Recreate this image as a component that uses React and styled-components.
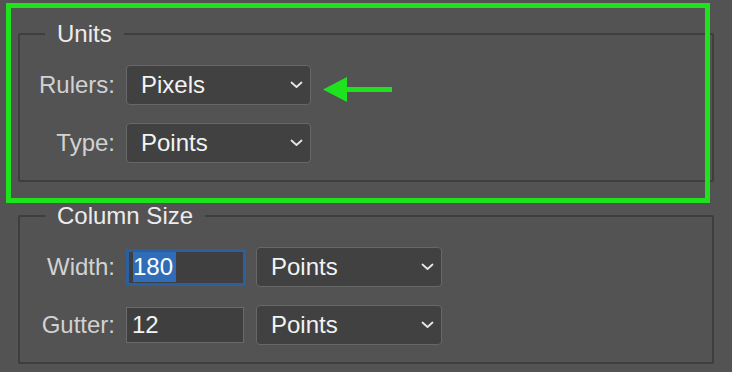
import React from "react";
import styled, { createGlobalStyle } from "styled-components";

const GlobalStyle = createGlobalStyle`
  html, body {
    margin: 0;
    padding: 0;
    background: #535353;
  }
  body {
    font-family: "Liberation Sans", Arial, sans-serif;
  }
`;

const Page = styled.div`
  position: relative;
  width: 732px;
  height: 372px;
  box-sizing: border-box;
  padding: 22px 18px 0 18px;
  background: #535353;
  display: flex;
  flex-direction: column;
  gap: 22px;
  overflow: hidden;
`;

const Group = styled.fieldset`
  margin: 0;
  min-width: 0;
  padding: 19px 0 17px 0;
  border: 2px solid #3e3e3e;
  border-radius: 2px;
  display: grid;
  grid-template-columns: 96px auto auto 1fr;
  column-gap: 10px;
  row-gap: 18px;
  align-items: center;
`;

const Legend = styled.legend`
  margin-left: 25px;
  padding: 0 12px;
  font-size: 24px;
  line-height: 24px;
  color: #ececec;
`;

const Label = styled.label`
  grid-column: 1;
  justify-self: end;
  font-size: 24px;
  color: #d2d2d2;
  margin-right: 1px;
`;

const SelectBox = styled.div`
  grid-column: ${(p) => p.$col || 2};
  width: ${(p) => p.$width}px;
  height: 40px;
  box-sizing: border-box;
  border: 1.5px solid #676767;
  border-radius: 4px;
  background: #414141;
  display: flex;
  align-items: center;
  justify-content: space-between;
  padding: 0 7px 0 14px;
  font-size: 24px;
  color: #f3f3f3;
`;

const Field = styled.div`
  grid-column: 2;
  width: ${(p) => (p.$focused ? 120 : 118)}px;
  height: ${(p) => (p.$focused ? 37 : 36)}px;
  box-sizing: border-box;
  border: ${(p) => (p.$focused ? "3px solid #2c5f9f" : "1.5px solid #6a6a6a")};
  background: #3f3f3f;
  display: flex;
  align-items: center;
  padding-left: ${(p) => (p.$focused ? 4 : 5)}px;
  font-size: 24px;
  color: #f3f3f3;
`;

const Selected = styled.span`
  background: #2f6db9;
  line-height: 30px;
  padding-right: 3px;
  color: #ffffff;
`;

const Highlight = styled.div`
  position: absolute;
  left: 6px;
  top: 3px;
  width: 704px;
  height: 200px;
  box-sizing: border-box;
  border: 5px solid #1fe21f;
  pointer-events: none;
`;

const Pointer = styled.svg`
  position: absolute;
  left: 322px;
  top: 76px;
`;

const Chevron = () => (
  <svg width="13" height="8" viewBox="0 0 13 8">
    <polyline
      points="1.5,1.5 6.5,6 11.5,1.5"
      fill="none"
      stroke="#e6e6e6"
      strokeWidth="1.8"
      strokeLinecap="round"
      strokeLinejoin="round"
    />
  </svg>
);

const Select = ({ value, width = 185, col }) => (
  <SelectBox $width={width} $col={col}>
    <span>{value}</span>
    <Chevron />
  </SelectBox>
);

export default function App() {
  return (
    <>
      <GlobalStyle />
      <Page>
        <Group>
          <Legend>Units</Legend>
          <Label>Rulers:</Label>
          <Select value="Pixels" />
          <Label>Type:</Label>
          <Select value="Points" />
        </Group>

        <Group>
          <Legend>Column Size</Legend>
          <Label>Width:</Label>
          <Field $focused>
            <Selected>180</Selected>
          </Field>
          <Select value="Points" width={186} col={3} />
          <Label>Gutter:</Label>
          <Field>12</Field>
          <Select value="Points" width={186} col={3} />
        </Group>

        <Highlight />
        <Pointer width="72" height="28" viewBox="0 0 72 28">
          <polygon points="1,13.5 25,1 25,26" fill="#1fe21f" />
          <rect x="22" y="11" width="48" height="5" fill="#1fe21f" />
        </Pointer>
      </Page>
    </>
  );
}
